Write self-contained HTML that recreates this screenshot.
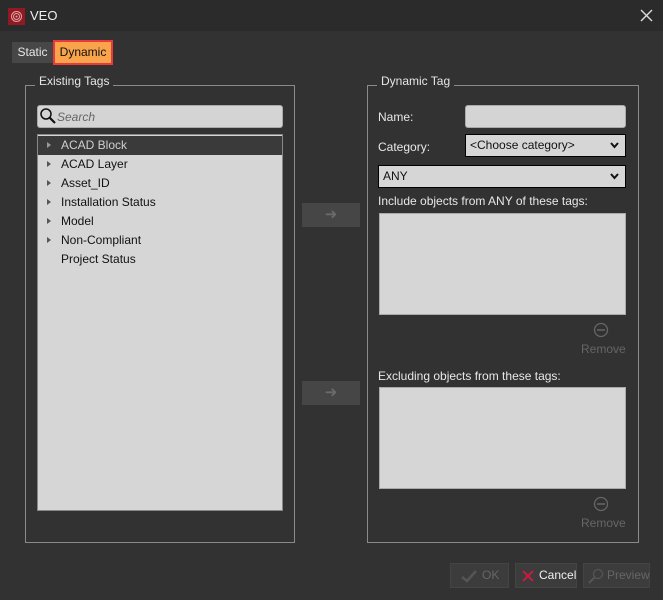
<!DOCTYPE html>
<html><head><style>
*{box-sizing:border-box;margin:0;padding:0}
body{width:663px;height:600px;background:#323232;font-family:"Liberation Sans",sans-serif;font-size:12px;color:#e8e8e8;position:relative;overflow:hidden}
.a{position:absolute}
.title{left:0;top:0;width:663px;height:31px;background:#2b2b2b}
.grp{border:1px solid #8a8a8a}
.lbl{background:#323232;padding:0 4px;color:#e6e6e6}
.box{background:#d6d6d6}
.row{position:absolute;left:0;width:244px;height:19px;line-height:19px;padding-left:23px;color:#111;font-size:12px}
.row .t{position:absolute;left:9px;top:6px;width:0;height:0;border-left:4px solid #555;border-top:3.5px solid transparent;border-bottom:3.5px solid transparent}
.arr{background:#464646;width:58px;height:24px;color:#6a6a6a;text-align:center;line-height:24px;font-size:15px}
.cmb{background:#d6d6d6;border:1px solid #000;color:#111;padding-left:4px;line-height:20px}
.chev{position:absolute;right:6px;top:7px}
.btn{background:#3c3c3c;border:1px solid #444;height:25px;line-height:23px;color:#666}
</style></head><body>
<div class="a title"></div>
<div class="a" style="left:8px;top:8px;width:17px;height:17px;background:#8e1b24"><svg width="17" height="17"><circle cx="8.5" cy="8.5" r="5" fill="none" stroke="#e8a0a0" stroke-width="1"/><circle cx="8.5" cy="8.5" r="3" fill="none" stroke="#e8a0a0" stroke-width="1"/><circle cx="8.5" cy="8.5" r="1" fill="#e8a0a0"/></svg></div>
<div class="a" style="left:30px;top:8px;font-size:13px;color:#f0f0f0">VEO</div>
<svg class="a" style="left:640px;top:9px" width="13" height="13"><path d="M1 1L12 12M12 1L1 12" stroke="#ddd" stroke-width="1.4"/></svg>

<div class="a" style="left:12px;top:42px;width:41px;height:21px;background:#474747;color:#e8e8e8;line-height:21px;text-align:center">Static</div>
<div class="a" style="left:53px;top:40px;width:60px;height:25px;background:#f9a34b;border:2px solid #e8393c;color:#111;line-height:21px;text-align:center">Dynamic</div>

<div class="a grp" style="left:25px;top:85px;width:270px;height:458px"></div>
<div class="a lbl" style="left:35px;top:74px">Existing Tags</div>
<div class="a" style="left:37px;top:105px;width:246px;height:23px;background:#d4d4d4;border:1px solid #aaa;border-radius:3px"></div>
<svg class="a" style="left:39px;top:107px" width="18" height="18"><circle cx="7" cy="7" r="5" fill="none" stroke="#111" stroke-width="1.5"/><path d="M10.5 10.5L16 16" stroke="#111" stroke-width="2.2"/></svg>
<div class="a" style="left:57px;top:110px;font-style:italic;color:#666;font-size:12px">Search</div>
<div class="a box" style="left:37px;top:134px;width:246px;height:377px;border:1px solid #888">
<div class="row" style="top:1px;background:#3a3a3a;color:#cfcfcf"><span class="t" style="border-left-color:#999"></span>ACAD Block</div>
<div class="row" style="top:20px"><span class="t"></span>ACAD Layer</div>
<div class="row" style="top:39px"><span class="t"></span>Asset_ID</div>
<div class="row" style="top:58px"><span class="t"></span>Installation Status</div>
<div class="row" style="top:77px"><span class="t"></span>Model</div>
<div class="row" style="top:96px"><span class="t"></span>Non-Compliant</div>
<div class="row" style="top:115px">Project Status</div>
</div>

<div class="a arr" style="left:302px;top:203px">➜</div>
<div class="a arr" style="left:302px;top:381px">➜</div>

<div class="a grp" style="left:367px;top:85px;width:272px;height:458px"></div>
<div class="a lbl" style="left:377px;top:74px">Dynamic Tag</div>
<div class="a" style="left:378px;top:110px">Name:</div>
<div class="a" style="left:465px;top:105px;width:161px;height:23px;background:#d4d4d4;border:1px solid #aaa;border-radius:3px"></div>
<div class="a" style="left:378px;top:140px">Category:</div>
<div class="a cmb" style="left:465px;top:134px;width:161px;height:23px">&lt;Choose category&gt;<svg class="chev" width="9" height="7"><path d="M1 1L4.5 5L8 1" stroke="#111" stroke-width="2" fill="none"/></svg></div>
<div class="a cmb" style="left:378px;top:165px;width:248px;height:23px">ANY<svg class="chev" width="9" height="7"><path d="M1 1L4.5 5L8 1" stroke="#111" stroke-width="2" fill="none"/></svg></div>
<div class="a" style="left:378px;top:194px">Include objects from ANY of these tags:</div>
<div class="a box" style="left:379px;top:213px;width:247px;height:102px;border:1px solid #aaa"></div>
<svg class="a" style="left:593px;top:322px" width="16" height="16"><circle cx="8" cy="8" r="6.5" fill="none" stroke="#666" stroke-width="1.3"/><path d="M4 8H12" stroke="#666" stroke-width="1.5"/></svg>
<div class="a" style="left:581px;top:342px;color:#666">Remove</div>
<div class="a" style="left:378px;top:369px">Excluding objects from these tags:</div>
<div class="a box" style="left:379px;top:387px;width:247px;height:102px;border:1px solid #aaa"></div>
<svg class="a" style="left:593px;top:496px" width="16" height="16"><circle cx="8" cy="8" r="6.5" fill="none" stroke="#666" stroke-width="1.3"/><path d="M4 8H12" stroke="#666" stroke-width="1.5"/></svg>
<div class="a" style="left:581px;top:516px;color:#666">Remove</div>

<div class="a btn" style="left:450px;top:563px;width:59px"><svg class="a" style="left:10px;top:5px" width="16" height="14"><path d="M1 8L6 12L15 2" stroke="#555" stroke-width="2.5" fill="none"/></svg><span class="a" style="left:31px;top:0">OK</span></div>
<div class="a btn" style="left:515px;top:563px;width:62px;color:#f0f0f0"><svg class="a" style="left:6px;top:6px" width="12" height="12"><path d="M1 1L11 11M11 1L1 11" stroke="#c41e3a" stroke-width="2"/></svg><span class="a" style="left:23px;top:0">Cancel</span></div>
<div class="a btn" style="left:583px;top:563px;width:67px"><svg class="a" style="left:4px;top:4px" width="16" height="16"><circle cx="10" cy="6" r="4.5" fill="none" stroke="#555" stroke-width="1.3"/><path d="M6.5 9.5L1 15" stroke="#555" stroke-width="2"/></svg><span class="a" style="left:23px;top:0">Preview</span></div>
</body></html>
